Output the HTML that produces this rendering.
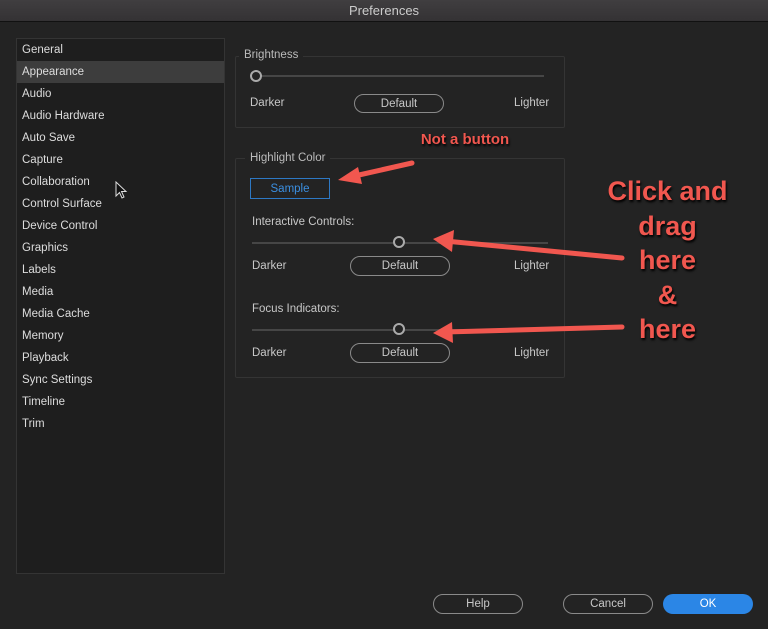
<!DOCTYPE html><html><head><style>
*{margin:0;padding:0;box-sizing:border-box}
body{width:768px;height:629px;background:#232323;font-family:"Liberation Sans",sans-serif;color:#c8c8c8;font-size:11.5px;position:relative;overflow:hidden}
.a{position:absolute}
.title{left:0;top:0;width:768px;height:22px;background:linear-gradient(#403e40,#343234);border-bottom:1px solid #111;text-align:center;line-height:22px;font-size:13px;color:#ccc}
.side{left:16px;top:38px;width:209px;height:536px;background:#1e1e1e;border:1px solid #343434}
.side div{height:22px;line-height:22px;padding-left:5px;color:#ddd}
.side .sel{background:#3d3d3d}
.grp{border:1px solid #343434;border-radius:2px}
.lbl{background:#232323;padding:0 5px;color:#bbb}
.track{height:2px;background:#464646}
.knob{width:12px;height:12px;border:2px solid #aaa;border-radius:50%;background:#232323}
.btn{border:1.5px solid #8a8a8a;border-radius:11px;color:#c8c8c8;display:flex;align-items:center;justify-content:center}
.red{color:#f1574f;font-weight:bold;text-shadow:1px 2px 2px #000}
</style></head><body>
<div class="a title">Preferences</div>
<div class="a side">
<div>General</div><div class="sel">Appearance</div><div>Audio</div><div>Audio Hardware</div><div>Auto Save</div><div>Capture</div><div>Collaboration</div><div>Control Surface</div><div>Device Control</div><div>Graphics</div><div>Labels</div><div>Media</div><div>Media Cache</div><div>Memory</div><div>Playback</div><div>Sync Settings</div><div>Timeline</div><div>Trim</div>
</div>
<svg class="a" style="left:114px;top:181px" width="14" height="20"><path d="M2 1 L2 15 L5.5 11.5 L8 17 L10 16 L7.5 10.5 L12 10.5 Z" fill="#111" stroke="#ddd" stroke-width="1"/></svg>
<div class="a grp" style="left:235px;top:56px;width:330px;height:72px"></div>
<div class="a lbl" style="left:239px;top:49px">Brightness</div>
<div class="a track" style="left:256px;top:75px;width:288px"></div>
<div class="a knob" style="left:250px;top:70px"></div>
<div class="a" style="left:250px;top:97px">Darker</div>
<div class="a btn" style="left:354px;top:94px;width:90px;height:19px">Default</div>
<div class="a" style="left:514px;top:97px">Lighter</div>

<div class="a grp" style="left:235px;top:158px;width:330px;height:220px"></div>
<div class="a lbl" style="left:245px;top:152px">Highlight Color</div>
<div class="a" style="left:250px;top:178px;width:80px;height:21px;border:1.5px solid #2d78c4;color:#3b8fe0;display:flex;align-items:center;justify-content:center">Sample</div>
<div class="a" style="left:252px;top:216px">Interactive Controls:</div>
<div class="a track" style="left:252px;top:242px;width:296px"></div>
<div class="a knob" style="left:393px;top:236px"></div>
<div class="a" style="left:252px;top:260px">Darker</div>
<div class="a btn" style="left:350px;top:256px;width:100px;height:20px">Default</div>
<div class="a" style="left:514px;top:260px">Lighter</div>
<div class="a" style="left:252px;top:303px">Focus Indicators:</div>
<div class="a track" style="left:252px;top:329px;width:296px"></div>
<div class="a knob" style="left:393px;top:323px"></div>
<div class="a" style="left:252px;top:347px">Darker</div>
<div class="a btn" style="left:350px;top:343px;width:100px;height:20px">Default</div>
<div class="a" style="left:514px;top:347px">Lighter</div>

<div class="a red" style="left:380px;top:131px;width:170px;text-align:center;font-size:15px">Not a button</div>
<div class="a red" style="left:580px;top:174px;width:175px;text-align:center;font-size:27px;line-height:34.5px">Click and<br>drag<br>here<br>&amp;<br>here</div>
<svg class="a" style="left:0;top:0" width="768" height="629">
<g stroke="#f1574f" stroke-width="5" stroke-linecap="round" fill="#f1574f">
<line x1="412" y1="163" x2="350" y2="177"/>
<line x1="622" y1="258" x2="445" y2="241"/>
<line x1="622" y1="327" x2="445" y2="332"/>
</g>
<g fill="#f1574f">
<polygon points="338,180 358,167 362,184"/>
<polygon points="433,239 454,230 452,252"/>
<polygon points="433,333 452,322 453,343"/>
</g>
</svg>
<div class="a btn" style="left:433px;top:594px;width:90px;height:20px">Help</div>
<div class="a btn" style="left:563px;top:594px;width:90px;height:20px">Cancel</div>
<div class="a" style="left:663px;top:594px;width:90px;height:20px;line-height:20px;border-radius:11px;background:#2b86e6;color:#fff;text-align:center">OK</div>
</body></html>
